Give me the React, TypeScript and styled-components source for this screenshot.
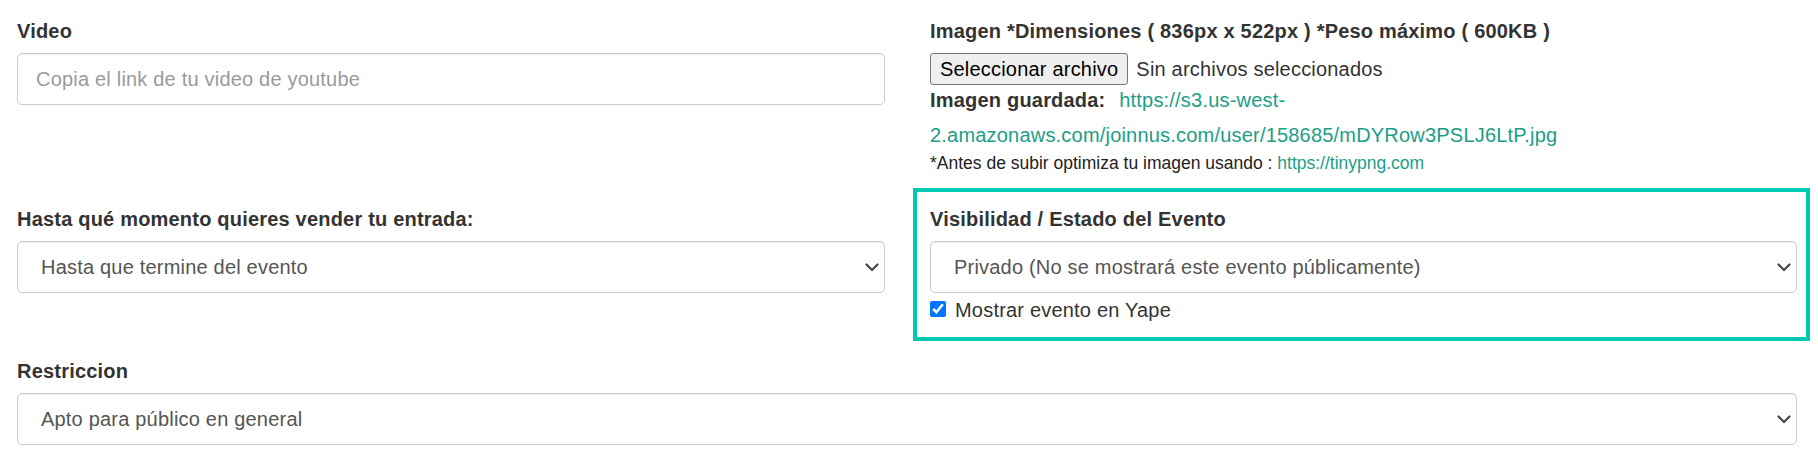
import React from "react";
import styled, { createGlobalStyle } from "styled-components";

const GlobalStyle = createGlobalStyle`
  html, body { margin: 0; padding: 0; background: #ffffff; }
  body {
    font-family: "Liberation Sans", Arial, Helvetica, sans-serif;
    font-size: 20px;
    line-height: 28px;
    letter-spacing: 0.2px;
    color: #333333;
  }
  *, *::before, *::after { box-sizing: border-box; }
`;

const Page = styled.div`
  padding: 17px 21px 0 17px;
`;

const Row = styled.div<{ $mt?: number }>`
  display: grid;
  grid-template-columns: 868px 867px;
  column-gap: 45px;
  margin-top: ${(p) => p.$mt ?? 0}px;
`;

const FullRow = styled.div<{ $mt?: number }>`
  display: flex;
  flex-direction: column;
  margin-top: ${(p) => p.$mt ?? 0}px;
`;

const Field = styled.div`
  display: flex;
  flex-direction: column;
  min-width: 0;
`;

const HighlightField = styled(Field)`
  position: relative;
  &::after {
    content: "";
    position: absolute;
    top: -17px;
    bottom: -17px;
    left: -17px;
    right: -13px;
    border: 4px solid #00cbb2;
    pointer-events: none;
  }
`;

const Label = styled.label`
  display: block;
  font-weight: 700;
  line-height: 28px;
  margin-bottom: 8px;
  color: #333333;
`;

const TextInput = styled.input`
  width: 100%;
  height: 52px;
  border: 1px solid #cccccc;
  border-radius: 5px;
  padding: 0 18px;
  font-family: inherit;
  font-size: 20px;
  letter-spacing: 0.2px;
  color: #555555;
  background: #ffffff;
  box-shadow: inset 0 1px 1px rgba(0, 0, 0, 0.075);
  outline: none;
  &::placeholder {
    color: #9a9a9a;
  }
`;

const SelectWrap = styled.div`
  position: relative;
  width: 100%;
`;

const Select = styled.select`
  appearance: none;
  -webkit-appearance: none;
  width: 100%;
  height: 52px;
  border: 1px solid #cccccc;
  border-radius: 5px;
  padding: 0 40px 0 23px;
  font-family: inherit;
  font-size: 20px;
  letter-spacing: 0.2px;
  color: #555555;
  background: #ffffff;
  box-shadow: inset 0 1px 1px rgba(0, 0, 0, 0.075);
  outline: none;
`;

const Chevron = styled.svg`
  position: absolute;
  right: 6px;
  top: 50%;
  width: 14px;
  height: 9px;
  margin-top: -4px;
  pointer-events: none;
`;

const FileRow = styled.div`
  display: flex;
  align-items: center;
  gap: 8px;
  height: 32px;
`;

const FileButton = styled.button`
  height: 32px;
  padding: 0 9px;
  border: 1px solid #767676;
  border-radius: 3px;
  background: #efefef;
  font-family: inherit;
  font-size: 20px;
  letter-spacing: 0.2px;
  line-height: 1;
  color: #000000;
`;

const FileStatus = styled.span`
  color: #333333;
`;

const Saved = styled.div`
  margin-top: 1px;
  line-height: 28px;
`;

const SavedLabel = styled.label`
  display: inline-block;
  font-weight: 700;
  margin-bottom: 7px;
  margin-right: 8px;
  color: #333333;
`;

const Link = styled.a`
  color: #1b9e88;
  text-decoration: none;
`;

const Hint = styled.p`
  margin: 2px 0 0;
  font-size: 17.5px;
  line-height: 25px;
  letter-spacing: 0;
  color: #222222;
`;

const CheckLine = styled.label`
  display: flex;
  align-items: center;
  gap: 9px;
  margin-top: 3px;
  line-height: 28px;
  color: #333333;
`;

const Check = styled.input`
  width: 16px;
  height: 16px;
  margin: 0 0 2px 0;
  flex: none;
`;

const Dropdown: React.FC<{ options: string[] }> = ({ options }) => (
  <SelectWrap>
    <Select defaultValue={options[0]}>
      {options.map((o) => (
        <option key={o} value={o}>
          {o}
        </option>
      ))}
    </Select>
    <Chevron viewBox="0 0 14 9" aria-hidden="true">
      <polyline
        points="1.5,1.5 7,7 12.5,1.5"
        fill="none"
        stroke="#444444"
        strokeWidth="2.2"
        strokeLinecap="round"
        strokeLinejoin="round"
      />
    </Chevron>
  </SelectWrap>
);

export default function App() {
  return (
    <>
      <GlobalStyle />
      <Page>
        <Row>
          <Field>
            <Label>Video</Label>
            <TextInput type="text" placeholder="Copia el link de tu video de youtube" />
          </Field>
          <Field>
            <Label>Imagen *Dimensiones ( 836px x 522px ) *Peso máximo ( 600KB )</Label>
            <FileRow>
              <FileButton type="button">Seleccionar archivo</FileButton>
              <FileStatus>Sin archivos seleccionados</FileStatus>
            </FileRow>
            <Saved>
              <SavedLabel>Imagen guardada:</SavedLabel>{" "}
              <Link href="#">
                https://s3.us-west-
                <br />
                2.amazonaws.com/joinnus.com/user/158685/mDYRow3PSLJ6LtP.jpg
              </Link>
            </Saved>
            <Hint>
              *Antes de subir optimiza tu imagen usando : <Link href="#">https://tinypng.com</Link>
            </Hint>
          </Field>
        </Row>
        <Row $mt={29}>
          <Field>
            <Label>Hasta qué momento quieres vender tu entrada:</Label>
            <Dropdown options={["Hasta que termine del evento"]} />
          </Field>
          <HighlightField>
            <Label>Visibilidad / Estado del Evento</Label>
            <Dropdown options={["Privado (No se mostrará este evento públicamente)"]} />
            <CheckLine>
              <Check type="checkbox" defaultChecked />
              Mostrar evento en Yape
            </CheckLine>
          </HighlightField>
        </Row>
        <FullRow $mt={33}>
          <Label>Restriccion</Label>
          <Dropdown options={["Apto para público en general"]} />
        </FullRow>
      </Page>
    </>
  );
}
